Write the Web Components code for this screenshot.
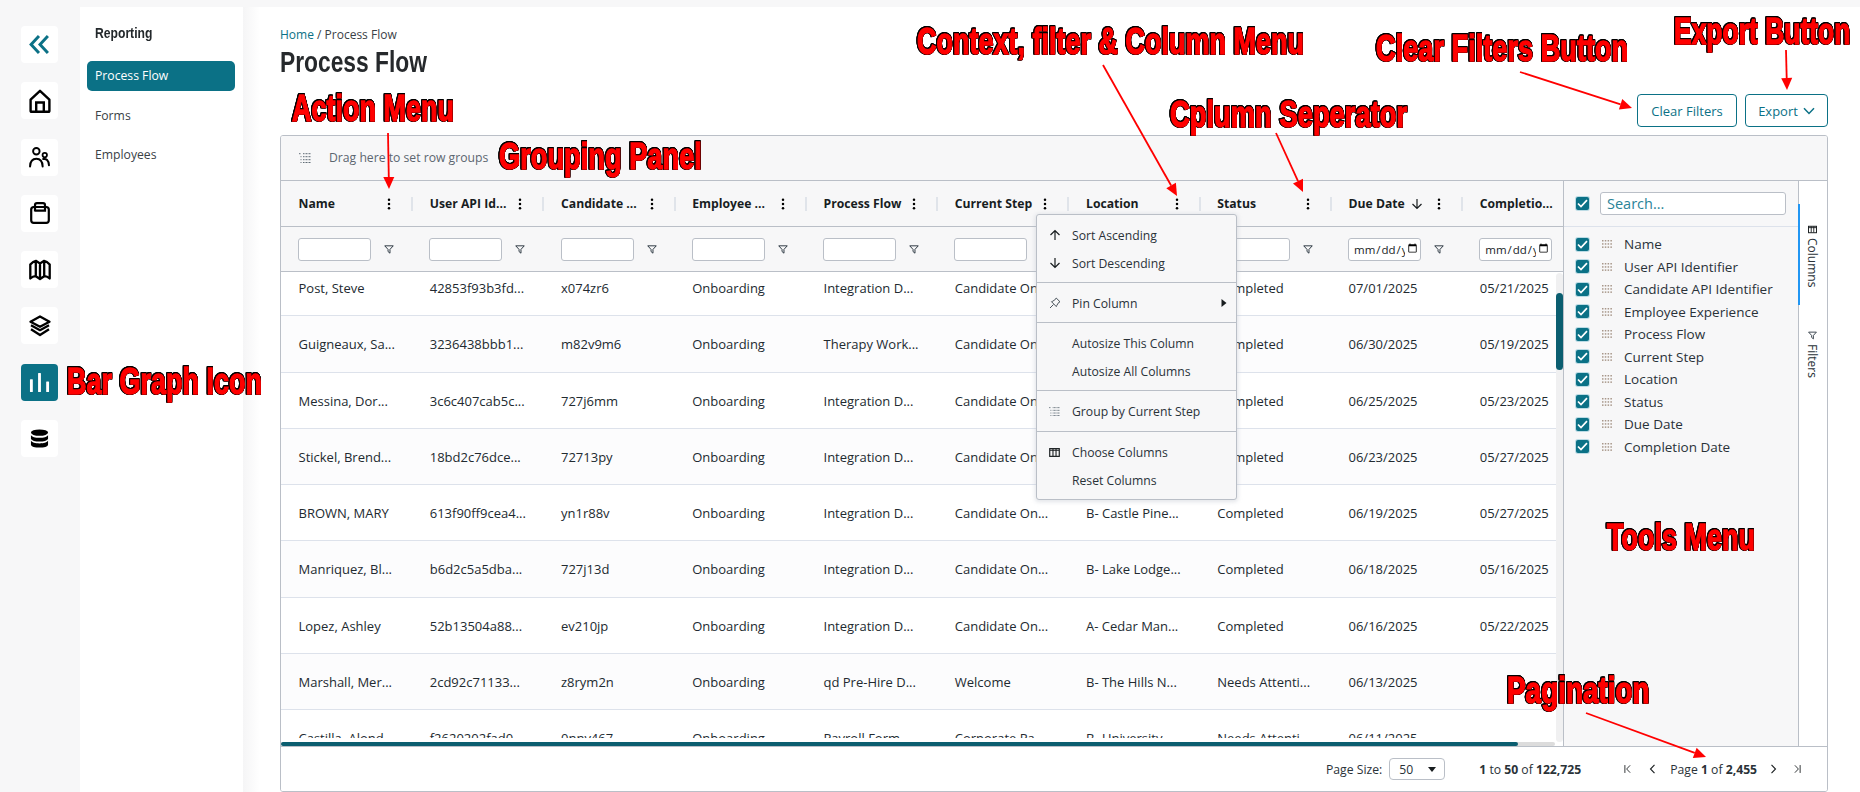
<!DOCTYPE html>
<html lang="en"><head><meta charset="utf-8"><title>Process Flow</title>
<style>
html,body{margin:0;padding:0;height:792px;overflow:hidden;background:#f7f7f8;color:#181d1f;font:12px "Open Sans","Noto Sans",sans-serif}
</style></head><body>
<process-app></process-app>
<script>
const ICONS={
 chevrons:['0 0 20 20','<path d="M9.5 2 2 10l7.5 8M18 2l-7.5 8 7.5 8" fill="none" stroke="#0b7186" stroke-width="2.8"/>'],
 home:['0 0 22 24','<path d="M11 1.8 1.6 10.6V22a.8.8 0 0 0 .8.8h17.2a.8.8 0 0 0 .8-.8V10.6z" fill="none" stroke="#000" stroke-width="2.4" stroke-linejoin="round"/><path d="M7.2 22.5V13.5h7.6v9" fill="none" stroke="#000" stroke-width="2.4"/>'],
 users:['0 0 20 20','<circle cx="7" cy="4" r="3.1" fill="none" stroke="#000" stroke-width="1.8"/><circle cx="15" cy="7.7" r="2.1" fill="none" stroke="#000" stroke-width="1.7"/><path d="M1 18.5c.2-5 2.6-7.2 6-7.2s5.800 2.200 6 7.200M13.500 11.500c3-.6 5.200 1.200 5.500 5.800" fill="none" stroke="#000" stroke-width="1.9" stroke-linecap="round"/>'],
 clip:['0 0 20 22','<rect x="1.200" y="5" width="17.600" height="15.800" rx="2.600" fill="none" stroke="#000" stroke-width="2.2"/><path d="M5 9.500V3.200C5 2 6 1.200 7 1.200h6c1 0 2 .8 2 2V5M5 5h10v3.600H5" fill="none" stroke="#000" stroke-width="2.2"/>'],
 map:['0 0 22 22','<path d="M1.300 5.500C3 3.500 5 2 6.800 1.800l4.200 2.600 4.200-2.600C17 2 19 3.500 20.700 5.500V19.500C19 18 17 17 15.200 17.200L11 20l-4.200-2.800C5 17 3 18 1.300 19.500zM6.800 1.800v15.400M11 4.400V20M15.200 1.800v15.400" fill="none" stroke="#000" stroke-width="2.300" stroke-linejoin="round"/>'],
 layers:['0 0 22 22','<path d="M11 1.500 20.500 6.700 11 11.800 1.500 6.700z" fill="none" stroke="#000" stroke-width="2.300" stroke-linejoin="round"/><path d="M2 10.300 11 15.200l9-4.900M2 14.200 11 20l9-5.800" fill="none" stroke="#000" stroke-width="2.300" stroke-linejoin="round"/>'],
 bars:['0 0 22 22','<rect x="1" y="7.500" width="3" height="13.500" rx=".6" fill="#fff"/><rect x="9.500" y="1" width="3" height="20" rx=".6" fill="#fff"/><rect x="18" y="10" width="3" height="11" rx=".6" fill="#fff"/>'],
 db:['0 0 20 20','<ellipse cx="10" cy="3.800" rx="9" ry="3.400"/><path d="M1 6.200c1 2.200 4.500 3 9 3s8-.8 9-3v4c-1 2.300-4.500 3-9 3s-8-.7-9-3z"/><path d="M1 12.200c1 2.200 4.500 3 9 3s8-.8 9-3v4C19 18.600 14.500 19.600 10 19.600S1 18.600 1 16.200z"/>'],
 dots:['0 0 4 12','<circle cx="2" cy="1.700" r="1.250"/><circle cx="2" cy="6" r="1.250"/><circle cx="2" cy="10.300" r="1.250"/>'],
 funnel:['0 0 12 11','<path d="M.8 1h10.400L7.200 5.400V10L4.800 8V5.400z" fill="none" stroke="#2d3842" stroke-width="1.200" stroke-linejoin="round"/>'],
 group:['0 0 12 10','<path d="M0 .7h2M4 .7h8M1.500 3.700h1.500M4 3.700h8M1.500 6.700h1.500M4 6.700h8M1.500 9.500h1.500M4 9.500h8" stroke="#5f6b75" stroke-width="1" fill="none" stroke-dasharray="1 .5"/>'],
 up:['0 0 12 12','<path d="M6 11V1.500M1.500 6 6 1.500 10.500 6" fill="none" stroke="#181d1f" stroke-width="1.200"/>'],
 down:['0 0 12 12','<path d="M6 1v9.500M1.500 6 6 10.500 10.500 6" fill="none" stroke="#181d1f" stroke-width="1.200"/>'],
 pin:['0 0 12 12','<path d="M7.200 1 11 4.800 9.800 5.300 7.800 8.400 7.300 9.600 2.500 4.700 3.800 4.200 6.600 2.200zM4.500 7.500 1 11" fill="none" stroke="#4a545c" stroke-width="1"/>'],
 cols:['0 0 12 10','<rect x=".7" y=".7" width="10.600" height="8.600" fill="none" stroke="#181d1f" stroke-width="1.300"/><path d="M4.300 1v8M7.700 1v8M1 2.500h10" stroke="#181d1f" stroke-width="1.200"/>'],
 caret:['0 0 6 8','<path d="M.5 0 5.500 4 .5 8z" fill="#181d1f"/>'],
 selcaret:['0 0 10 6','<path d="M0 0h10L5 6z" fill="#181d1f"/>'],
 chevdown:['0 0 12 8','<path d="M1 1.200 6 6.400 11 1.200" fill="none" stroke="#0b7186" stroke-width="1.500"/>'],
 first:['0 0 8 10','<path d="M1 .5v9M7 .8 3 5l4 4.200" fill="none" stroke="#181d1f" stroke-width="1"/>'],
 prev:['0 0 6 10','<path d="M5 .8 1 5l4 4.200" fill="none" stroke="#181d1f" stroke-width="1.100"/>'],
 next:['0 0 6 10','<path d="M1 .8 5 5 1 9.200" fill="none" stroke="#181d1f" stroke-width="1.100"/>'],
 last:['0 0 8 10','<path d="M7 .5v9M1 .8 5 5 1 9.200" fill="none" stroke="#181d1f" stroke-width="1"/>'],
 grip:['0 0 10 8','<g fill="#a8978a"><rect x="0" y="0" width="1.500" height="1.500"/><rect x="2.800" y="0" width="1.500" height="1.500"/><rect x="5.600" y="0" width="1.500" height="1.500"/><rect x="8.400" y="0" width="1.500" height="1.500"/><rect x="0" y="3.200" width="1.500" height="1.500"/><rect x="2.800" y="3.200" width="1.500" height="1.500"/><rect x="5.600" y="3.200" width="1.500" height="1.500"/><rect x="8.400" y="3.200" width="1.500" height="1.500"/><rect x="0" y="6.400" width="1.500" height="1.500"/><rect x="2.800" y="6.400" width="1.500" height="1.500"/><rect x="5.600" y="6.400" width="1.500" height="1.500"/><rect x="8.400" y="6.400" width="1.500" height="1.500"/></g>']
};
function define(tag,css,html){
  customElements.define(tag,class extends HTMLElement{
    connectedCallback(){
      if(this.shadowRoot)return;
      const r=this.attachShadow({mode:'open'});
      r.innerHTML='<style>'+css+'</style>'+(typeof html==='function'?html(this):html);
    }
  });
}
define('ui-icon',':host{display:inline-flex;flex:none;line-height:0;width:var(--w,12px);height:var(--h,12px)}svg{width:100%;height:100%;display:block}',
 el=>{const [vb,p]=ICONS[el.getAttribute('name')];return `<svg viewBox="${vb}" xmlns="http://www.w3.org/2000/svg">${p}</svg>`});
define('ui-check',':host{display:inline-flex;flex:none;width:13px;height:13px;background:#0b7186;border-radius:2px;box-shadow:0 0 0 1px #bcdbe4;align-items:center;justify-content:center}svg{width:11px;height:9px}',
 '<svg viewBox="0 0 11 9"><path d="M1 4.500 4 7.500 10 1.200" fill="none" stroke="#fff" stroke-width="1.700"/></svg>');
define('rail-btn',':host{display:flex;width:37px;height:37px;background:#fff;border-radius:4px;align-items:center;justify-content:center}:host([active]){background:#0b7186}',
 '<slot></slot>');
define('side-rail',':host{display:flex;flex-direction:column;width:80px;flex:none;box-sizing:border-box;padding:26px 0 0 21px;gap:19.300px}','<slot></slot>');
define('side-nav',`:host{display:block;width:163px;flex:none;background:#fff;margin-top:7px;box-sizing:border-box;padding:16px 8px 0 7px;font:12.200px "Open Sans",sans-serif}
 h2{margin:0 0 0 8px;font:bold 15px/19px "Liberation Sans",sans-serif;color:#23282b;transform:scaleX(.81);transform-origin:0 0}
 a{display:block;height:30px;line-height:30px;padding-left:8px;border-radius:5px;color:#3a4146;margin-top:9.500px}
 a.on{background:#0b7186;color:#fff;margin-top:19px}`,
 '<h2>Reporting</h2><a class="on">Process Flow</a><a>Forms</a><a>Employees</a>');
define('page-head',`:host{display:flex;justify-content:space-between;align-items:flex-end;height:128px;box-sizing:border-box;padding:19px 0 8px 0;width:1548px}
 .crumb{font-size:12px;line-height:18px;color:#3a4146}.crumb b{font-weight:400;color:#0b7186}
 h1{margin:0;font:bold 30px/36px "Liberation Sans",sans-serif;color:#26292c;transform:scaleX(.76);transform-origin:0 0}
 .left{align-self:flex-start}.btns{display:flex;gap:8px}
 button{height:33px;box-sizing:border-box;border:1.500px solid #0b7186;border-radius:4px;background:#fff;color:#0b7186;font:500 13px "Open Sans",sans-serif;padding:0;display:flex;align-items:center;justify-content:center;gap:5px}
 .c{width:100px}.e{width:83px}ui-icon{--w:12px;--h:8px}`,
 `<div class="left"><div class="crumb"><b>Home</b> / Process Flow</div><h1>Process Flow</h1></div>
  <div class="btns"><button class="c">Clear Filters</button><button class="e">Export<ui-icon name="chevdown"></ui-icon></button></div>`);
const COLS=[['Name'],['User API Id...'],['Candidate ...'],['Employee ...'],['Process Flow'],['Current Step'],['Location'],['Status'],['Due Date'],['Completio...']];
const ROWS=[
['Post, Steve','42853f93b3fd...','x074zr6','Onboarding','Integration D...','Candidate On...','B- Castle Pine...','Completed','07/01/2025','05/21/2025'],
['Guigneaux, Sa...','3236438bbb1...','m82v9m6','Onboarding','Therapy Work...','Candidate On...','B- University...','Completed','06/30/2025','05/19/2025'],
['Messina, Dor...','3c6c407cab5c...','727j6mm','Onboarding','Integration D...','Candidate On...','B- Lake Lodge...','Completed','06/25/2025','05/23/2025'],
['Stickel, Brend...','18bd2c76dce...','72713py','Onboarding','Integration D...','Candidate On...','B- The Hills N...','Completed','06/23/2025','05/27/2025'],
['BROWN, MARY','613f90ff9cea4...','yn1r88v','Onboarding','Integration D...','Candidate On...','B- Castle Pine...','Completed','06/19/2025','05/27/2025'],
['Manriquez, Bl...','b6d2c5a5dba...','727j13d','Onboarding','Integration D...','Candidate On...','B- Lake Lodge...','Completed','06/18/2025','05/16/2025'],
['Lopez, Ashley','52b13504a88...','ev210jp','Onboarding','Integration D...','Candidate On...','A- Cedar Man...','Completed','06/16/2025','05/22/2025'],
['Marshall, Mer...','2cd92c71133...','z8rym2n','Onboarding','qd Pre-Hire D...','Welcome','B- The Hills N...','Needs Attenti...','06/13/2025',''],
['Castilla, Alond...','f2620202fad0...','0nnv467','Onboarding','Payroll Form...','Corporate Pa...','B- University...','Needs Attenti...','06/11/2025','']
];
define('grid-head',`:host{display:grid;grid-template-columns:repeat(10,131.250px);height:46px;border-bottom:1px solid #babfc7;box-sizing:border-box;background:#f7f7f8}
 .h{display:flex;align-items:center;padding-left:17.500px;position:relative;font:700 12.200px "Open Sans",sans-serif;color:#181d1f;white-space:nowrap}
 .h span{flex:1;min-width:0}
 ui-icon.d{--w:4px;--h:12px;position:absolute;left:106px;top:17px}
 ui-icon.s{--w:12px;--h:12px;position:absolute;left:80px;top:17px}
 .h::after{content:"";position:absolute;left:130px;top:16px;width:2px;height:14px;background:#e0e4ea}
 .h:last-child::after{display:none}`,
 ()=>COLS.map((c,i)=>`<div class="h"><span>${c[0]}</span>${i==8?'<ui-icon class="s" name="down"></ui-icon>':''}${i<9?'<ui-icon class="d" name="dots"></ui-icon>':''}</div>`).join(''));
define('grid-filters',`:host{display:grid;grid-template-columns:repeat(10,131.250px);height:45px;border-bottom:1px solid #babfc7;box-sizing:border-box;background:#f7f7f8}
 .f{display:flex;align-items:center;padding-left:17.500px;position:relative}
 input{box-sizing:border-box;width:73px;height:23px;border:1px solid #babfc7;border-radius:3px;background:#fff;padding:0 0 0 4px;margin:0 0 0 -.5px;font:11.500px "Open Sans",sans-serif;color:#181d1f}
 ui-icon{--w:10px;--h:9px;position:absolute;left:103px;top:17.500px}`,
 ()=>COLS.map((c,i)=>`<div class="f"><input type="${i>=8?'date':'text'}" aria-label="${c[0]}">${i<9?'<ui-icon name="funnel"></ui-icon>':''}</div>`).join(''));
define('grid-rows',`:host{display:block;height:466px;overflow:hidden;background:#fff}
 .wrap{margin-top:-12px}
 .r{display:grid;grid-template-columns:repeat(10,131.250px);height:56.300px;box-sizing:border-box;border-bottom:1px solid #dde2eb}
 .r:nth-child(even){background:#fcfcfd}
 .r div{padding-left:17.500px;line-height:57px;white-space:nowrap;font-size:13px;color:#222a30}`,
 ()=>'<div class="wrap">'+ROWS.map(r=>'<div class="r">'+r.map(c=>`<div>${c}</div>`).join('')+'</div>').join('')+'</div>');
define('column-menu',`:host{position:absolute;left:755px;top:78px;width:201px;height:286px;box-sizing:border-box;background:#f7f7f8;border:1px solid #babfc7;border-radius:3px;box-shadow:0 1px 4px 1px rgba(186,191,199,.4);padding:6px 0 0;font:12.200px "Open Sans",sans-serif;color:#2a3238;z-index:3}
 .i{height:28px;display:flex;align-items:center;position:relative;padding-left:35px;white-space:nowrap}
 .i ui-icon{position:absolute;left:12px;top:8px;--w:12px;--h:12px}
 .i ui-icon.g{--w:11px;--h:9px;top:9.500px}
 .i ui-icon.t{left:184px;top:10px;--w:6px;--h:8px}
 hr{border:0;border-top:1px solid #babfc7;margin:5px 0 6px;height:0}hr.x{margin:6px 0 6px}`,
 `<div class="i"><ui-icon name="up"></ui-icon>Sort Ascending</div>
  <div class="i"><ui-icon name="down"></ui-icon>Sort Descending</div><hr>
  <div class="i"><ui-icon name="pin"></ui-icon>Pin Column<ui-icon class="t" name="caret"></ui-icon></div><hr>
  <div class="i">Autosize This Column</div><div class="i">Autosize All Columns</div><hr>
  <div class="i"><ui-icon class="g" name="group"></ui-icon>Group by Current Step</div><hr class="x">
  <div class="i"><ui-icon class="g" name="cols"></ui-icon>Choose Columns</div><div class="i">Reset Columns</div>`);
define('tool-panel',`:host{display:flex;flex-direction:column;width:236px;flex:none;box-sizing:border-box;background:#f7f7f8;border-left:1px solid #babfc7;border-right:1px solid #babfc7;font:13.500px "Open Sans",sans-serif;color:#2a3238}
 .top{height:46px;box-sizing:border-box;border-bottom:1px solid #dde2eb;display:flex;align-items:center;padding-left:12px;gap:11px}
 input{width:186px;height:23px;box-sizing:border-box;border:1px solid #babfc7;border-radius:3px;background:#fff;padding:0 0 0 6px;font:14.500px "Open Sans",sans-serif;color:#0b7186}
 input::placeholder{color:#2a8397;opacity:1}
 .l{padding:6px 0 0 12px}
 .c{height:22.500px;display:flex;align-items:center;white-space:nowrap}
 ui-icon{--w:10px;--h:8px;margin:0 12px 0 13px}`,
 `<div class="top"><ui-check></ui-check><input placeholder="Search..." aria-label="Search"></div>
  <div class="l">${['Name','User API Identifier','Candidate API Identifier','Employee Experience','Process Flow','Current Step','Location','Status','Due Date','Completion Date'].map(n=>`<div class="c"><ui-check></ui-check><ui-icon name="grip"></ui-icon>${n}</div>`).join('')}</div>`);
define('side-tabs',`:host{display:block;width:28px;flex:none;background:#fff;font:12px "Open Sans",sans-serif;color:#2a3238;position:relative}
 .t{writing-mode:vertical-rl;display:flex;align-items:center;gap:4px;position:absolute;left:5px}
 .a{top:44px}.b{top:150px}
 .bar{position:absolute;left:-1px;top:23px;width:2px;height:101px;background:#2196f3}
 ui-icon{--w:9px;--h:9px}`,
 `<div class="bar"></div><div class="t a"><ui-icon name="cols"></ui-icon>Columns</div><div class="t b"><ui-icon name="funnel"></ui-icon>Filters</div>`);
define('v-scroll',`:host{position:absolute;right:0;top:92px;bottom:4px;width:7px;background:#f0f0f1;border-radius:4px;z-index:1}
 i{display:block;position:absolute;left:0;top:20px;width:7px;height:77px;background:#0b5e70;border-radius:4px}`,'<i></i>');
define('h-scroll',`:host{display:block;height:4px;margin:4px 0 0 0;width:1274px;background:#dcdcdc;border-radius:2px;position:relative}
 i{display:block;width:1237px;height:4px;background:#0b5e70;border-radius:2px}`,'<i></i>');
define('grid-pager',`:host{display:flex;align-items:center;height:45px;box-sizing:border-box;border-top:1px solid #babfc7;background:#fff;font:12.200px "Open Sans",sans-serif;color:#2a3238;padding-left:1045px;white-space:nowrap}
 .sel{width:56px;height:22px;box-sizing:border-box;border:1px solid #babfc7;border-radius:4px;margin:0 34px 0 7px;display:flex;align-items:center;padding-left:9px;justify-content:space-between;padding-right:8px}
 .sel ui-icon{--w:8px;--h:5px}
 .rng{width:145px}
 ui-icon{--w:7px;--h:10px}.p{margin:0 18px 0 0}
 .pg{margin:0 13px 0 14px}.nx{margin-right:17px}`,
 `Page Size:<div class="sel">50<ui-icon name="selcaret"></ui-icon></div><div class="rng"><b>1</b> to <b>50</b> of <b>122,725</b></div>
  <ui-icon class="p" name="first"></ui-icon><ui-icon name="prev"></ui-icon><span class="pg">Page <b>1</b> of <b>2,455</b></span><ui-icon class="nx" name="next"></ui-icon><ui-icon name="last"></ui-icon>`);
define('data-grid',`:host{display:block;width:1548px;height:657px;box-sizing:border-box;border:1px solid #babfc7;border-radius:3px;position:relative;background:#fff;overflow:hidden}
 .grp{height:45px;box-sizing:border-box;background:#f7f7f8;border-bottom:1px solid #babfc7;display:flex;align-items:center;padding:0 0 1px 18px;font:12.200px "Open Sans",sans-serif;color:#5c6670;gap:18px}
 .grp ui-icon{--w:12px;--h:10px}
 .mid{display:flex;height:565px}
 .cols{width:1282px;flex:none;overflow:hidden;position:relative}
 .inner{width:1313px}`,
 `<div class="grp"><ui-icon name="group"></ui-icon>Drag here to set row groups</div>
 <div class="mid"><div class="cols"><div class="inner"><grid-head></grid-head><grid-filters></grid-filters><grid-rows></grid-rows></div><h-scroll></h-scroll><v-scroll></v-scroll></div><tool-panel></tool-panel><side-tabs></side-tabs></div>
 <grid-pager></grid-pager><column-menu></column-menu>`);
define('main-area',`:host{display:block;flex:1;min-width:0;margin-top:7px;height:785px;box-sizing:border-box;padding:0 0 0 37px;background:linear-gradient(to right,#f5f5f6,#fff 17px)}`,
 '<page-head></page-head><data-grid></data-grid>');
define('note-label',`:host{position:absolute;left:var(--x);top:var(--y);font:bold 36px/1 "Liberation Sans",sans-serif;color:#f00;-webkit-text-stroke:1.400px #f00;filter:drop-shadow(.7px 0 0 #000) drop-shadow(-.7px 0 0 #000) drop-shadow(0 .7px 0 #000) drop-shadow(0 -.7px 0 #000);white-space:nowrap;transform-origin:0 0;transform:scaleX(var(--k,.75));z-index:9}`,'<slot></slot>');
define('note-arrows',`:host{position:absolute;left:0;top:0;width:1860px;height:792px;pointer-events:none;z-index:8}svg{display:block}`,
 ()=>{const A=[[388,133,389,189],[1103,65,1177,196],[1276,133,1303,192],[1520,72,1632,108],[1786,50,1787,90],[1586,713,1706,757]];
  return '<svg width="1860" height="792">'+A.map(([a,b,c,d])=>{const t=Math.atan2(d-b,c-a),L=12,W=5.500,bx=c-L*Math.cos(t),by=d-L*Math.sin(t),nx=-Math.sin(t)*W,ny=Math.cos(t)*W;
   return `<line x1="${a}" y1="${b}" x2="${bx}" y2="${by}" stroke="#f00" stroke-width="1.800"/><path d="M${c} ${d}L${bx+nx} ${by+ny}L${bx-nx} ${by-ny}z" fill="#f00"/>`}).join('')+'</svg>'});
define('process-app',`:host{display:flex;width:1860px;height:792px;position:relative;overflow:hidden}`,
 `<side-rail>
  <rail-btn><ui-icon name="chevrons" style="--w:21px;--h:21px"></ui-icon></rail-btn>
  <rail-btn><ui-icon name="home" style="--w:22px;--h:24px"></ui-icon></rail-btn>
  <rail-btn><ui-icon name="users" style="--w:21px;--h:21px"></ui-icon></rail-btn>
  <rail-btn><ui-icon name="clip" style="--w:20px;--h:22px"></ui-icon></rail-btn>
  <rail-btn><ui-icon name="map" style="--w:22px;--h:22px"></ui-icon></rail-btn>
  <rail-btn><ui-icon name="layers" style="--w:22px;--h:22px"></ui-icon></rail-btn>
  <rail-btn active><ui-icon name="bars" style="--w:21px;--h:21px"></ui-icon></rail-btn>
  <rail-btn><ui-icon name="db" style="--w:19px;--h:19px"></ui-icon></rail-btn>
 </side-rail><side-nav></side-nav><main-area></main-area>
 <note-arrows></note-arrows>
 <note-label style="--x:292px;--y:91px">Action Menu</note-label>
 <note-label style="--x:499px;--y:139px;--k:.757">Grouping Panel</note-label>
 <note-label style="--x:917px;--y:24px">Context, filter &amp; Column Menu</note-label>
 <note-label style="--x:1170px;--y:97px;--k:.76">Cplumn Seperator</note-label>
 <note-label style="--x:1376px;--y:31px;--k:.755">Clear Filters Button</note-label>
 <note-label style="--x:1674px;--y:14px;--k:.735">Export Button</note-label>
 <note-label style="--x:67px;--y:364px">Bar Graph Icon</note-label>
 <note-label style="--x:1607px;--y:520px">Tools Menu</note-label>
 <note-label style="--x:1507px;--y:673px;--k:.775">Pagination</note-label>`);
</script>
</body></html>
